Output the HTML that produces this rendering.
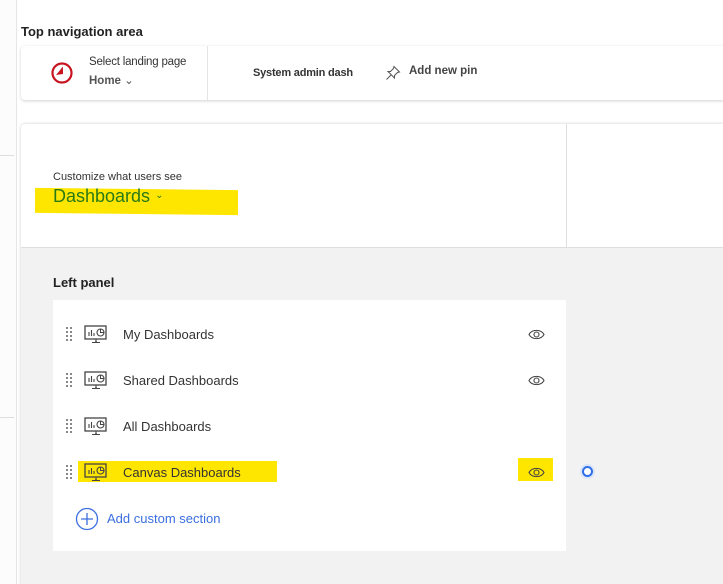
<!DOCTYPE html>
<html><head><style>
html,body{margin:0;width:723px;height:584px;overflow:hidden}
body{background:#fff;font-family:"Liberation Sans",sans-serif;position:relative;color:#2c2c2c}
.a{position:absolute}
.hl{position:absolute;background:#ffe600}
</style></head><body>
<div class="a" style="left:0;top:0;width:16px;height:584px;background:#fcfcfc;border-right:1px solid #e6e6e6"></div>
<div class="a" style="left:0;top:155px;width:14px;height:1px;background:#ddd"></div>
<div class="a" style="left:0;top:417px;width:14px;height:1px;background:#ddd"></div>
<div class="a" style="left:21px;top:24px;font-size:13px;font-weight:bold;color:#222">Top navigation area</div>
<div class="a" style="left:21px;top:46px;width:710px;height:54px;background:#fff;border-radius:4px;box-shadow:0 1px 3px rgba(0,0,0,.18)"></div>
<div class="a" style="left:207px;top:46px;width:1px;height:54px;background:#e4e4e4"></div>
<svg class="a" style="left:50px;top:61px" width="24" height="24" viewBox="0 0 24 24"><circle cx="12" cy="12" r="9.5" fill="none" stroke="#c8141e" stroke-width="2.2"/><path d="M13 5.5 L13 13 L6 14 Z" fill="#c8141e"/></svg>
<div class="a" style="left:89px;top:56px;font-size:11.5px;color:#333;letter-spacing:-.2px">Select landing page</div>
<div class="a" style="left:89px;top:73px;font-size:11.5px;color:#555;font-weight:bold">Home <span style="font-weight:normal">&#8964;</span></div>
<div class="a" style="left:253px;top:67px;font-size:11px;font-weight:bold;color:#333;letter-spacing:-.2px">System admin dash</div>
<svg class="a" style="left:385px;top:65px" width="16" height="16" viewBox="0 0 16 16"><path d="M9 1.5 L14.5 7 L12.5 7.5 L9.5 10.5 L9.5 13 L3 6.5 L5.5 6.5 L8.5 3.5 Z M6 10 L1.5 14.5" fill="none" stroke="#555" stroke-width="1"/></svg>
<div class="a" style="left:409px;top:65px;font-size:11.5px;font-weight:bold;color:#444">Add new pin</div>
<div class="a" style="left:21px;top:124px;width:710px;height:470px;background:#f2f2f2;border-radius:4px;box-shadow:0 0 3px rgba(0,0,0,.2)"></div>
<div class="a" style="left:21px;top:124px;width:710px;height:123px;background:#fff;border-bottom:1px solid #dedede;border-radius:4px 4px 0 0"></div>
<div class="a" style="left:566px;top:124px;width:1px;height:123px;background:#dedede"></div>
<div class="a" style="left:53px;top:171px;font-size:11px;color:#333">Customize what users see</div>
<div class="hl" style="left:35px;top:189px;width:203px;height:25px;transform:skewY(.6deg)"></div>
<div class="a" style="left:53px;top:186px;font-size:18px;color:#2a7a16">Dashboards <span style="font-size:10px;position:relative;top:-4px">&#8964;</span></div>
<div class="a" style="left:53px;top:275px;font-size:13px;font-weight:bold;color:#222">Left panel</div>
<div class="a" style="left:53px;top:300px;width:513px;height:251px;background:#fff"></div>
<div class="hl" style="left:78px;top:461px;width:199px;height:21px"></div>
<div class="hl" style="left:518px;top:458px;width:35px;height:23px"></div>
<div id="rows"></div>
<div class="a" style="left:580px;top:464px;width:15px;height:15px;border-radius:50%;background:#dce6fb"></div>
<div class="a" style="left:582px;top:466px;width:7px;height:7px;border-radius:50%;border:2px solid #2f6fe8;background:#fff"></div>
<svg class="a" style="left:75px;top:507px" width="24" height="24" viewBox="0 0 24 24"><circle cx="12" cy="12" r="10.5" fill="none" stroke="#3a6fe0" stroke-width="1.3"/><path d="M12 6v12M6 12h12" stroke="#3a6fe0" stroke-width="1.3"/></svg>
<div class="a" style="left:107px;top:511px;font-size:13px;color:#3a6fe0">Add custom section</div>
<script>
var r=[["My Dashboards",335,1],["Shared Dashboards",381,1],["All Dashboards",427,0],["Canvas Dashboards",473,1]],h="";
r.forEach(function(x){var y=x[1];
h+='<svg class="a" style="left:66px;top:'+(y-8)+'px" width="8" height="17"><g fill="#888">'+[0,4,8,12].map(function(t){return '<rect x="0" y="'+t+'" width="2" height="2"/><rect x="4" y="'+t+'" width="2" height="2"/>'}).join('')+'</g></svg>';
h+='<svg class="a" style="left:84px;top:'+(y-10)+'px" width="24" height="20" viewBox="0 0 24 20"><rect x="1" y="1" width="21" height="13" fill="none" stroke="#444" stroke-width="1.3"/><path d="M5 11V7M7.5 11V5M10 11V8M11 17h2M12 14v3M8 17.5h8" stroke="#444" stroke-width="1.1"/><circle cx="16.5" cy="7.5" r="3.5" fill="none" stroke="#444" stroke-width="1.1"/><path d="M16.5 4v3.5h3.5" fill="none" stroke="#444" stroke-width="1"/></svg>';
h+='<div class="a" style="left:123px;top:'+(y-8)+'px;font-size:13px;color:#333">'+x[0]+'</div>';
if(x[2])h+='<svg class="a" style="left:528px;top:'+(y-7)+'px" width="17" height="13" viewBox="0 0 17 13"><path d="M1 6.5C4 1 13 1 16 6.5C13 12 4 12 1 6.5Z" fill="none" stroke="#444" stroke-width="1.1"/><circle cx="8.5" cy="6.5" r="2.5" fill="none" stroke="#444" stroke-width="1.1"/></svg>';
});
document.getElementById("rows").outerHTML=h;
</script>
</body></html>
